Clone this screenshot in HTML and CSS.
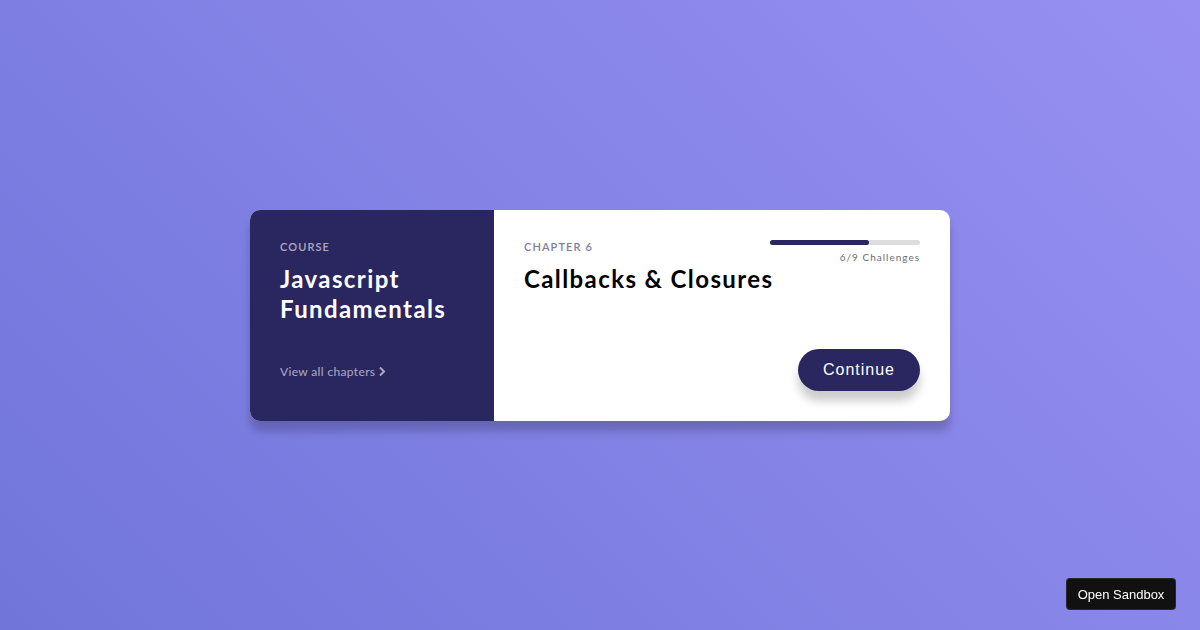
FILE: index.html
```html
<!DOCTYPE html>
<html>
<head>
<meta charset="utf-8">
<link rel="stylesheet" href="styles.css">
</head>
<body>
<div class="course">
  <div class="course-preview">
    <h6 class="label">Course</h6>
    <h2 class="title">Javascript Fundamentals</h2>
    <a class="link" href="#">View all chapters <svg class="chev" width="8" height="11" viewBox="0 0 8 11"><path d="M2 1.5 L6 5.5 L2 9.5" fill="none" stroke="#fff" stroke-width="2"/></svg></a>
  </div>
  <div class="course-info">
    <div class="progress-container">
      <div class="progress"><div class="progress-fill"></div></div>
      <span class="progress-text">6/9 Challenges</span>
    </div>
    <h6 class="label">Chapter 6</h6>
    <h2 class="title">Callbacks &amp; Closures</h2>
    <button class="btn">Continue</button>
  </div>
</div>
<div class="sandbox">Open Sandbox</div>
</body>
</html>
```
FILE: styles.css
```css
* { box-sizing: border-box; }
html, body { height: 100%; }
body {
  margin: 0;
  min-height: 100vh;
  background-image: linear-gradient(45deg, #7175da, #9790f2);
  font-family: Lato, "Noto Sans", sans-serif;
  display: flex;
  align-items: center;
  justify-content: center;
}
.course {
  width: 700px;
  height: 211px;
  background: #fff;
  border-radius: 10px;
  box-shadow: 0 10px 10px rgba(0,0,0,0.2);
  display: flex;
  overflow: hidden;
}
.course-preview {
  width: 244px;
  flex: none;
  background: #2a265f;
  color: #fff;
  padding: 30px;
  display: flex;
  flex-direction: column;
  align-items: flex-start;
}
.label {
  margin: 0;
  font-size: 11px;
  line-height: 14px;
  font-weight: 600;
  letter-spacing: 1.1px;
  text-transform: uppercase;
  opacity: 0.6;
}
.title {
  margin: 10px 0 0;
  font-size: 24px;
  line-height: 30px;
  font-weight: 700;
  letter-spacing: 1.4px;
}
.link {
  margin-top: 40px;
  color: #fff;
  opacity: 0.6;
  font-size: 12px;
  line-height: 16px;
  letter-spacing: 0.35px;
  text-decoration: none;
  display: flex;
  align-items: center;
  gap: 3px;
}
.course-info {
  flex: 1;
  position: relative;
  padding: 30px;
  color: #000;
}
.course-info .label { color: #2a265f; }
.progress-container {
  position: absolute;
  top: 30px;
  right: 30px;
  width: 150px;
  text-align: right;
}
.progress {
  position: relative;
  height: 5px;
  border-radius: 3px;
  background: #ddd;
}
.progress-fill {
  position: absolute;
  left: 0; top: 0;
  height: 5px;
  width: 66%;
  border-radius: 3px;
  background: #2a265f;
}
.progress-text {
  display: block;
  margin-top: 6px;
  font-size: 10px;
  line-height: 12px;
  letter-spacing: 1px;
  opacity: 0.6;
  color: #000;
}
.btn {
  position: absolute;
  right: 30px;
  bottom: 30px;
  height: 42px;
  padding: 0 25px;
  border: 0;
  border-radius: 50px;
  background: #2a265f;
  color: #fff;
  font-family: "Liberation Sans", Arial, sans-serif;
  font-size: 16px;
  letter-spacing: 1px;
  box-shadow: 0 10px 10px rgba(0,0,0,0.2);
}
.sandbox {
  position: fixed;
  right: 24px;
  bottom: 20px;
  width: 110px;
  height: 32px;
  background: #111;
  color: #fff;
  border-radius: 4px;
  font-family: "Liberation Sans", Arial, sans-serif;
  font-size: 13px;
  display: flex;
  align-items: center;
  justify-content: center;
  border: 1px solid rgba(255,255,255,0.1);
}
```
